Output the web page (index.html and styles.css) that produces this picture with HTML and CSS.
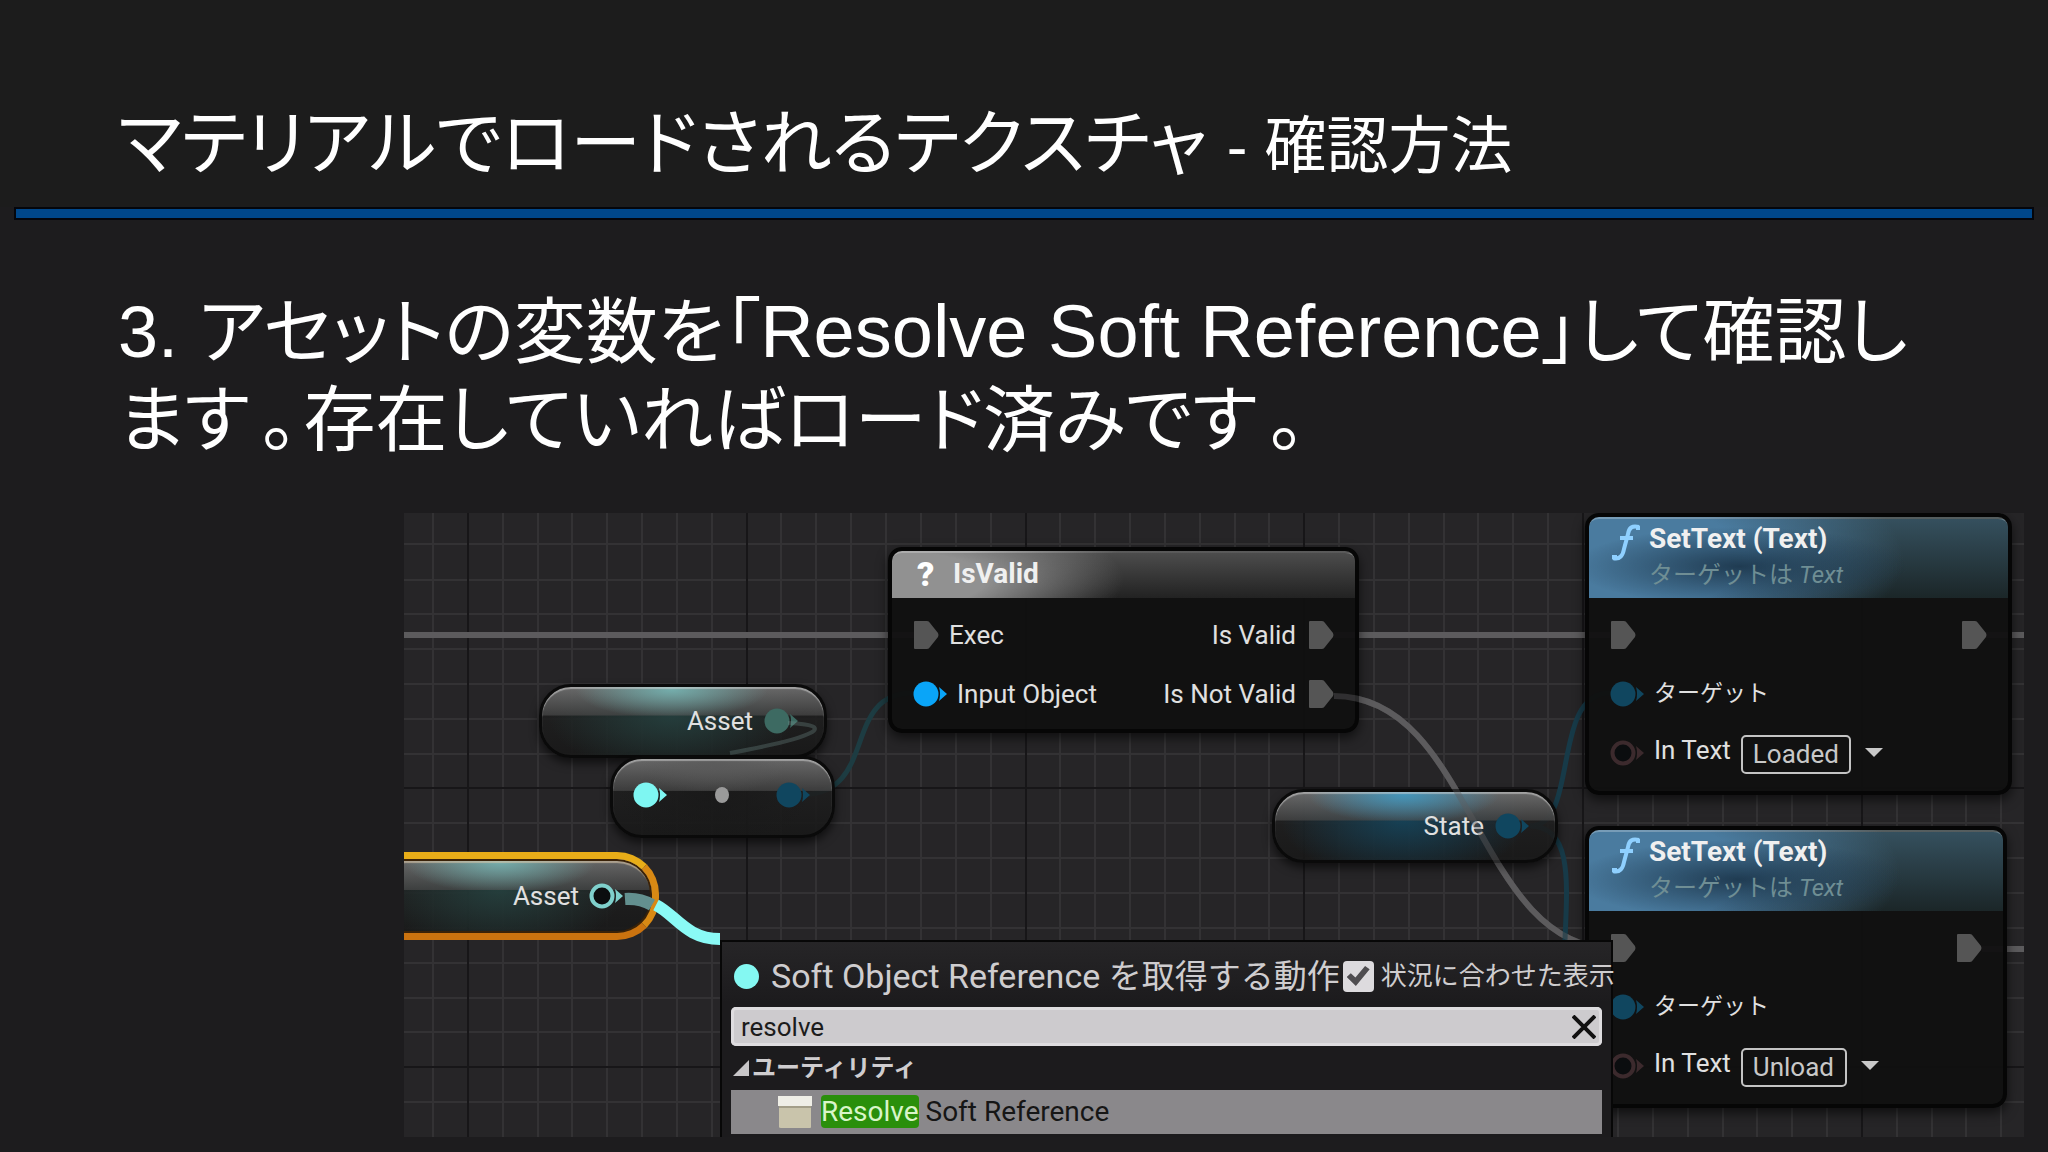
FILE: index.html
```html
<!DOCTYPE html>
<html lang="ja">
<head>
<meta charset="utf-8">
<meta name="viewport" content="width=device-width, initial-scale=1">
<title>マテリアルでロードされるテクスチャ - 確認方法</title>
<link rel="stylesheet" href="styles.css">
</head>
<body>
<svg class="defs" width="0" height="0" aria-hidden="true">
  <symbol id="pin-exec" viewBox="0 0 26 30"><path d="M2 1h12q2 0 3 2l8 10q1 2 0 4l-8 10q-1 2-3 2H2q-1 0-1-1V2q0-1 1-1z"/></symbol>
  <symbol id="pin-data" viewBox="0 0 34 26"><circle cx="13" cy="13" r="12.5"/><path d="M26 6l8 7-8 7q2-7 0-14z"/></symbol>
  <symbol id="pin-open" viewBox="0 0 34 26"><circle cx="13" cy="13" r="10.5" fill="#0b0d0f" stroke="currentColor" stroke-width="4"/><path d="M26 6l8 7-8 7q2-7 0-14z"/></symbol>
  <symbol id="fn" viewBox="0 0 30 38"><path d="M2 35c7 2 10-3 11-9l4-15c1-6 4-9 11-7M9 15h13" fill="none" stroke="currentColor" stroke-width="4"/><path d="M1 32h5v4H1zM25 3h4v4h-4z"/></symbol>
</svg>

<header class="title-bar">
  <h1 class="title">マテリアルでロードされるテクスチャ <span class="title-sub">- 確認方法</span></h1>
</header>
<div class="rule"></div>

<main>
  <p class="lead">3. アセットの変数を「<span class="latin">Resolve Soft Reference</span>」して確認し<br>ます<span class="stop">。</span>存在していればロード済みです<span class="stop">。</span></p>

  <section class="graph">
    <svg class="wires" viewBox="404 513 1620 624" width="1620" height="624" aria-hidden="true">
      <path class="grid-minor" d="M433 513v624M503 513v624M538 513v624M572 513v624M607 513v624M642 513v624M677 513v624M712 513v624M781 513v624M816 513v624M851 513v624M886 513v624M921 513v624M956 513v624M991 513v624M1060 513v624M1095 513v624M1130 513v624M1165 513v624M1200 513v624M1235 513v624M1269 513v624M1339 513v624M1374 513v624M1409 513v624M1444 513v624M1478 513v624M1513 513v624M1548 513v624M1618 513v624M1653 513v624M1688 513v624M1723 513v624M1757 513v624M1792 513v624M1827 513v624M1897 513v624M1932 513v624M1966 513v624M2001 513v624M404 544h1620M404 580h1620M404 614h1620M404 649h1620M404 684h1620M404 719h1620M404 754h1620M404 823h1620M404 858h1620M404 893h1620M404 928h1620M404 963h1620M404 998h1620M404 1032h1620M404 1102h1620"/>
      <path class="grid-major" d="M468 513v624M747 513v624M1026 513v624M1304 513v624M1583 513v624M1862 513v624M404 788h1620M404 1067h1620"/>
      <path class="wire-exec" d="M404 635H914M1334 635H1610M1986 635H2024M1982 949H2024M1334 696C1474 696 1475 949 1615 949"/>
      <path class="wire-ref" d="M800 795C880 795 840 693 913 693"/>
      <path class="wire-state" d="M1530 826C1580 826 1550 693 1610 693M1530 826C1590 826 1555 940 1567 1006"/>
    </svg>

    <article class="node is-valid">
      <h2 class="node-head head-gray"><span class="mark">?</span>IsValid</h2>
      <div class="row">
        <span class="port"><svg class="exec"><use href="#pin-exec"/></svg>Exec</span>
        <span class="port port-out">Is Valid<svg class="exec"><use href="#pin-exec"/></svg></span>
      </div>
      <div class="row">
        <span class="port"><svg class="data blue"><use href="#pin-data"/></svg>Input Object</span>
        <span class="port port-out">Is Not Valid<svg class="exec"><use href="#pin-exec"/></svg></span>
      </div>
    </article>

    <div class="pill asset">
      <span>Asset</span><svg class="data green"><use href="#pin-data"/></svg>
      <svg class="loop" viewBox="0 0 96 40" aria-hidden="true"><path d="M60 8C110 10 90 22 2 38"/></svg>
    </div>
    <div class="pill reroute">
      <svg class="data cyan"><use href="#pin-data"/></svg><i class="knot"></i><svg class="data navy"><use href="#pin-data"/></svg>
    </div>
    <div class="pill selected">
      <span>Asset</span><svg class="data mint"><use href="#pin-open"/></svg>
    </div>
    <div class="pill state">
      <span>State</span><svg class="data navy"><use href="#pin-data"/></svg>
    </div>
    <svg class="drag" viewBox="0 0 100 60" width="100" height="60" aria-hidden="true">
      <path class="drag-dim" d="M3 12Q18 11 30 18"/><path class="drag-lit" d="M34 18C54 28 64 52 98 52"/>
    </svg>
    <svg class="wires over" viewBox="404 513 1620 624" width="1620" height="624" aria-hidden="true">
      <path class="wire-exec" d="M1334 696C1474 696 1475 949 1615 949"/>
    </svg>

    <article class="node set-text loaded">
      <h2 class="node-head head-blue"><svg class="fn"><use href="#fn"/></svg><span>SetText (Text)<small>ターゲットは <em>Text</em></small></span></h2>
      <div class="row">
        <svg class="exec"><use href="#pin-exec"/></svg><svg class="exec"><use href="#pin-exec"/></svg>
      </div>
      <div class="row"><span class="port ja"><svg class="data navy"><use href="#pin-data"/></svg>ターゲット</span></div>
      <div class="row"><span class="port"><svg class="data plum"><use href="#pin-open"/></svg><label for="t1">In Text</label><input id="t1" class="value value-wide" type="text" value="Loaded"><button class="drop" type="button" aria-label="In Text"></button></span></div>
    </article>

    <article class="node set-text unload">
      <h2 class="node-head head-blue"><svg class="fn"><use href="#fn"/></svg><span>SetText (Text)<small>ターゲットは <em>Text</em></small></span></h2>
      <div class="row">
        <svg class="exec"><use href="#pin-exec"/></svg><svg class="exec"><use href="#pin-exec"/></svg>
      </div>
      <div class="row"><span class="port ja"><svg class="data navy"><use href="#pin-data"/></svg>ターゲット</span></div>
      <div class="row"><span class="port"><svg class="data plum"><use href="#pin-open"/></svg><label for="t2">In Text</label><input id="t2" class="value" type="text" value="Unload"><button class="drop" type="button" aria-label="In Text"></button></span></div>
    </article>

    <section class="menu">
      <div class="menu-head">
        <i class="type-dot"></i>
        <h3 class="menu-title">Soft Object Reference <span class="menu-title-ja">を取得する動作</span></h3>
        <input id="ctx" class="tick" type="checkbox" checked><label class="ctx" for="ctx">状況に合わせた表示</label>
      </div>
      <div class="search">
        <input class="search-text" type="text" value="resolve" aria-label="検索">
        <button class="clear" type="button" aria-label="消去"><svg width="24" height="24" viewBox="0 0 24 24"><path d="M1 1l22 22M23 1L1 23" stroke="#111" stroke-width="4"/></svg></button>
      </div>
      <h4 class="group"><svg width="16" height="16" viewBox="0 0 16 16"><path d="M16 0v16H0z" fill="#c8c6c8"/></svg>ユーティリティ</h4>
      <button class="item" type="button">
        <svg width="34" height="34" viewBox="0 0 34 34"><path d="M1 12h32v20q0 1-1 1H3q-2 0-2-1z" fill="#c9c4ab"/><path d="M0 1h34v10H0z" fill="#efeee6"/><path d="M1 11h32v2H1z" fill="#a39e88"/></svg>
        <span><mark>Resolve</mark> Soft Reference</span>
      </button>
    </section>
  </section>
</main>
</body>
</html>
```

FILE: styles.css
```css
* { box-sizing: border-box; }

body {
  margin: 0;
  min-height: 100vh;
  background: #1d1c1e;
  color: #fff;
  font-family: "Liberation Sans", "Noto Sans CJK JP", sans-serif;
}

h1, h2, h3, h4, p { margin: 0; font-weight: 400; }
button, input { font: inherit; color: inherit; margin: 0; padding: 0; border: 0; background: none; }
svg { display: block; flex: none; fill: currentColor; }
.defs { position: absolute; }

/* Slide heading */
.title-bar { padding: 96px 118px 0; height: 207px; background: #1c1c1c; }
.title {
  font-size: 71px;
  line-height: 96px;
  font-feature-settings: "palt";
  white-space: nowrap;
}
.title-sub { font-size: 62px; }

.rule {
  height: 13px;
  margin: 0 14px;
  border: 2px solid #04060c;
  background: #00478a;
}

.lead {
  padding: 68px 118px 0;
  font-size: 72px;
  line-height: 88px;
  font-feature-settings: "palt";
}
.latin { font-size: 74px; line-height: 1; }
.stop { margin: 0 6px 0 12px; }

/* Blueprint canvas */
.graph {
  position: relative;
  height: 624px;
  margin: 49px 24px 15px 404px;
  overflow: hidden;
  background: #262527;
  color: #e0e0e0;
  font-family: Roboto, "Noto Sans CJK JP", sans-serif;
  font-size: 26px;
  line-height: 32px;
}
.wires { position: absolute; left: 0; top: 0; fill: none; }
.over { opacity: 0.4; }
.grid-minor { stroke: #333234; stroke-width: 2; }
.grid-major { stroke: #171618; stroke-width: 2; }
.wire-exec { stroke: #5c5b5d; stroke-width: 6; }
.wire-ref { stroke: #1d3c42; stroke-width: 5; }
.wire-state { stroke: #173a48; stroke-width: 5; }

.node {
  position: absolute;
  border: 4px solid #060606;
  border-radius: 14px;
  background: rgba(16, 16, 16, 0.95);
  box-shadow: 0 5px 12px rgba(0, 0, 0, 0.6);
}
.is-valid { left: 484px; top: 34px; width: 471px; height: 186px; }
.set-text { left: 1181px; height: 282px; }
.loaded { top: 0; width: 427px; }
.unload { top: 313px; width: 422px; }

.node-head {
  display: flex;
  padding: 0 22px;
  border-radius: 10px 10px 0 0;
  border-top: 2px solid rgba(255, 255, 255, 0.25);
  font-size: 28px;
  font-weight: 700;
  color: #f0f0f0;
}
.head-gray {
  height: 47px;
  padding-top: 5px;
  background:
    radial-gradient(ellipse 50% 160% at 0 60%, #919191 40%, rgba(120, 120, 120, 0) 100%),
    linear-gradient(#4c4c4c, #222);
}
.mark { width: 39px; padding-left: 3px; font-size: 34px; font-weight: 900; color: #fff; }
.head-blue {
  height: 81px;
  gap: 8px;
  padding-top: 4px;
  background:
    radial-gradient(ellipse 40% 50% at 36% 60%, rgba(24, 48, 68, 0.85), rgba(24, 48, 68, 0)),
    radial-gradient(ellipse 75% 150% at 0 50%, #4a7b9f 50%, rgba(60, 110, 140, 0) 100%),
    linear-gradient(#35505e, #1b2628);
}
.head-blue small {
  display: block;
  font-size: 24px;
  line-height: 40px;
  font-weight: 400;
  color: #6f8e94;
}
.fn { width: 30px; height: 38px; color: #8fd0ff; }

.row {
  display: flex;
  align-items: center;
  justify-content: space-between;
  height: 59px;
  padding: 0 21px;
}
.node-head + .row { margin-top: 7px; }
.port { display: flex; align-items: center; gap: 10px; white-space: nowrap; }
.port-out { gap: 12px; }
.port label { padding-bottom: 5px; }
.ja { font-size: 23px; }
.exec { width: 26px; height: 30px; color: #555; }
.data { width: 34px; height: 26px; }
.blue { color: #0aa5f8; }
.navy { color: #10465f; }
.green { color: #3d6a62; }
.cyan { color: #7ef6f2; }
.mint { color: #7fd0cc; }
.plum { color: #3c2a2d; }

.value {
  width: 106px;
  height: 39px;
  margin-top: 3px;
  padding: 0 10px;
  border: 2px solid #c4c4c4;
  border-radius: 5px;
  color: #c8c8c8;
}
.value-wide { width: 110px; }
.drop {
  margin-left: 4px;
  border: solid transparent;
  border-width: 9px 9px 0;
  border-top-color: #c8c8c8;
}

/* Variable nodes */
.pill {
  --tint: 120, 190, 188;
  --deep: 38, 70, 68;
  position: absolute;
  display: flex;
  align-items: center;
  justify-content: flex-end;
  gap: 11px;
  height: 74px;
  padding-right: 26px;
  border: 3px solid #0a0a0a;
  border-radius: 32px;
  background:
    radial-gradient(ellipse 34% 100% at 46% 10%, rgba(var(--tint), 0.8), rgba(var(--tint), 0)) 0 0 / 100% 42% no-repeat,
    linear-gradient(rgba(128, 128, 128, 0.75), rgba(70, 70, 70, 0.75)) 0 0 / 100% 42% no-repeat,
    radial-gradient(ellipse 44% 90% at 46% 40%, rgba(var(--deep), 0.8), rgba(var(--deep), 0)),
    linear-gradient(rgba(34, 34, 34, 0.85), rgba(24, 24, 24, 0.9));
  box-shadow: inset 0 2px 1px rgba(220, 220, 220, 0.5), 0 5px 10px rgba(0, 0, 0, 0.6);
}
.asset { left: 135px; top: 171px; width: 288px; }
.reroute {
  --tint: 90, 90, 90;
  --deep: 24, 24, 24;
  left: 206px;
  top: 243px;
  width: 225px;
  height: 82px;
  padding: 0 22px 4px 20px;
  justify-content: space-between;
}
.knot { width: 14px; height: 16px; border-radius: 50%; background: #9a9a9a; }
.state { --tint: 60, 160, 205; --deep: 20, 74, 100; left: 868px; top: 276px; width: 286px; }
.selected {
  left: -40px;
  top: 339px;
  width: 295px;
  height: 88px;
  padding-right: 29px;
  gap: 10px;
  border: 7px solid #d88914;
  border-top-color: #e8ad18;
  border-bottom-color: #cb730f;
  border-radius: 42px;
  box-shadow: inset 0 0 0 2px #3a2208, inset 0 4px 1px rgba(220, 200, 170, 0.6);
}
.loop { position: absolute; right: 0; bottom: 0; width: 96px; height: 40px; fill: none; stroke: rgba(120, 150, 145, 0.3); stroke-width: 4; }
.drag { position: absolute; left: 218px; top: 374px; fill: none; stroke-width: 12; }
.drag-dim { stroke: #63908f; }
.drag-lit { stroke: #8afaf5; }

/* Action menu */
.menu {
  position: absolute;
  left: 316px;
  top: 427px;
  width: 893px;
  height: 200px;
  padding: 0 9px;
  border: 2px solid #070707;
  background: linear-gradient(#262527, #1c1b1d 60px);
  color: #cfcdcf;
}
.menu-head { display: flex; align-items: center; height: 65px; padding: 3px 0 0 3px; white-space: nowrap; }
.type-dot { flex: none; width: 25px; height: 25px; margin-right: 12px; border-radius: 50%; background: #84f8f2; }
.menu-title { font-size: 34px; line-height: 44px; }
.menu-title-ja { font-size: 33px; }
.tick {
  appearance: none;
  flex: none;
  width: 31px;
  height: 31px;
  margin: 0 7px 0 3px;
  border-radius: 4px;
  background: #dddbde;
  display: grid;
  place-items: center;
}
.tick:checked::before {
  content: "";
  width: 23px;
  height: 20px;
  background: #4f4d50;
  clip-path: polygon(0 55%, 18% 36%, 38% 58%, 80% 0, 100% 16%, 40% 100%);
}
.ctx { font-size: 26px; }
.search {
  display: flex;
  align-items: center;
  height: 39px;
  padding: 0 6px 0 10px;
  border-radius: 5px;
  background: #cdcbce;
  box-shadow: inset 0 0 0 3px #dedcdf;
  color: #1c1c1c;
}
.search-text { flex: 1; min-width: 0; height: 36px; }
.clear { height: 24px; }
.group {
  display: flex;
  align-items: center;
  gap: 3px;
  height: 44px;
  padding-left: 2px;
  font-size: 24px;
  font-weight: 700;
}
.item {
  display: flex;
  align-items: center;
  gap: 9px;
  width: 100%;
  height: 44px;
  padding-left: 47px;
  background: #8a888b;
  color: #161616;
  font-size: 28px;
}
.item mark { border-radius: 4px; background: #2a8f0b; color: #d9f5c8; }
```
